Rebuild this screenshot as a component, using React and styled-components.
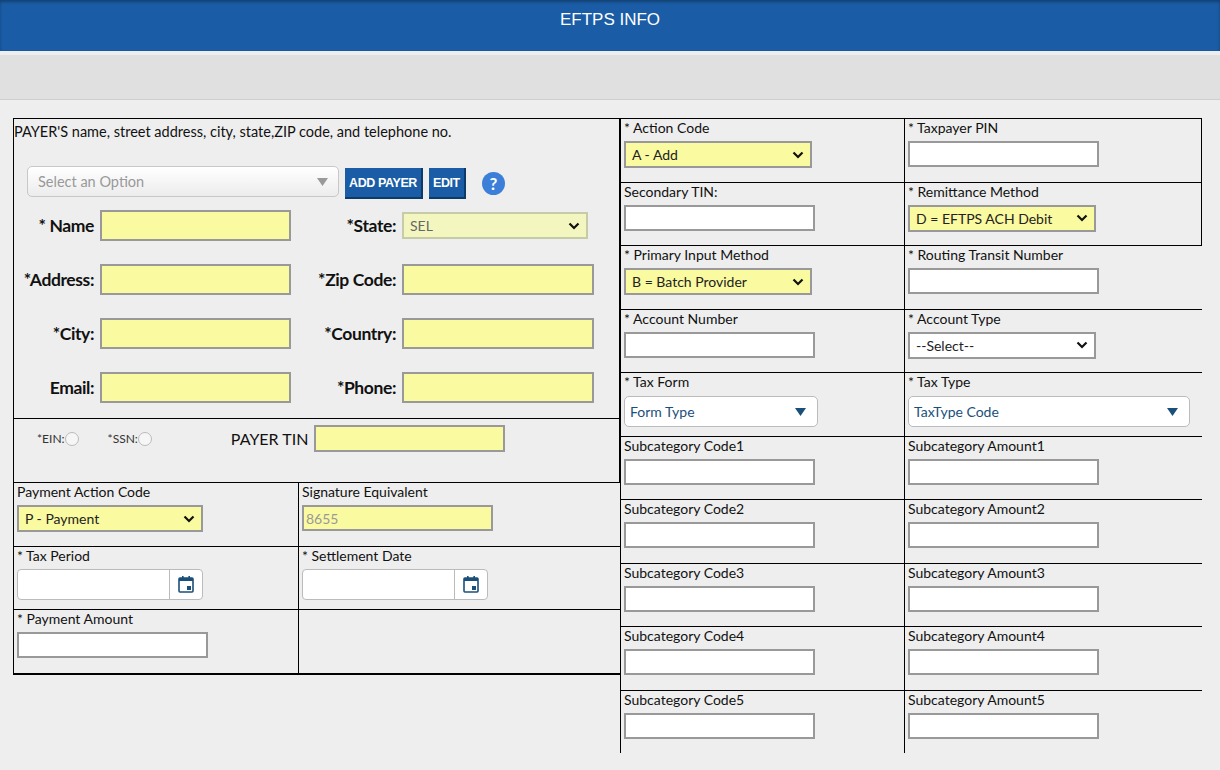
import React from 'react';
import styled, { createGlobalStyle } from 'styled-components';

const Global = createGlobalStyle`
  body { margin: 0; background: #eeeeee; font-family: Lato, "Noto Sans", sans-serif; color: #111; }
  * { box-sizing: border-box; }
`;

const Header = styled.div`
  height: 51px;
  background: #1a5ca5;
  box-shadow: inset 0 2px 3px rgba(0,0,0,0.3);
  color: #fff;
  font-family: "Liberation Sans", Arial, sans-serif;
  font-size: 17px;
  text-align: center;
  padding-top: 10px;
`;

const SubBar = styled.div`
  height: 45px;
  margin-top: 4px;
  background: #e0e0e0;
  border-bottom: 1px solid #cfcfcf;
`;

const Body = styled.div`
  margin-top: 5px;
  background: #eeeeee;
  display: flex;
  align-items: flex-start;
  padding: 13px 0 0 13px;
  height: 665px;
`;

const LeftPanel = styled.div`
  width: 607px;
  border: 1px solid #000;
  border-right: none;
`;

const PayerBox = styled.div`
  height: 299px;
  padding: 4px 0 0 0;
  border-right: 1px solid #000;
`;

const Caption = styled.div`
  font-size: 14.5px;
  margin-bottom: 28px;
`;

const SearchRow = styled.div`
  display: flex;
  align-items: center;
  gap: 6px;
  padding-left: 13px;
  margin-bottom: 11px;
`;

const Combo = styled.div`
  width: 312px;
  height: 31px;
  border: 1px solid #c8c8c8;
  border-radius: 5px;
  background: linear-gradient(#ffffff, #ececec);
  color: #999;
  font-size: 14.5px;
  display: flex;
  align-items: center;
  justify-content: space-between;
  padding: 0 10px;
  margin-top: -4px;
`;

const BlueBtn = styled.button`
  height: 31px;
  background: #1a5ca5;
  color: #fff;
  border: none;
  border-right: 2px solid #0e3a6a;
  border-bottom: 2px solid #0e3a6a;
  font-family: "Liberation Sans", Arial, sans-serif;
  font-weight: 700;
  font-size: 12.5px;
  letter-spacing: -0.4px;
  padding: 0 4px;
`;

const Help = styled.span`
  width: 23px;
  height: 23px;
  border-radius: 50%;
  background: #3b7fd8;
  color: #fff;
  font-weight: 700;
  font-size: 17px;
  display: inline-flex;
  align-items: center;
  justify-content: center;
  margin-left: 10px;
`;

const PayerGrid = styled.div`
  display: grid;
  grid-template-columns: 78px 191px 99px 192px;
  column-gap: 6px;
  row-gap: 23px;
  align-items: center;
  padding-left: 2px;
`;

const BigLabel = styled.label`
  font-size: 17.5px;
  font-weight: 700;
  text-align: right;
  white-space: nowrap;
  letter-spacing: -0.4px;
`;

const YellowInput = styled.input`
  width: ${p => p.$w || 191}px;
  height: ${p => p.$h || 31}px;
  background: #fafaa0;
  border: 2px solid #999;
  font-family: inherit;
  font-size: 14px;
  color: #999;
  padding: 0 2px;
`;

const WhiteInput = styled.input`
  width: ${p => p.$w || 191}px;
  height: 26px;
  background: #fff;
  border: 2px solid #999;
  font-family: inherit;
`;

const Select = styled.div`
  width: ${p => p.$w || 186}px;
  height: 27px;
  background: ${p => p.$white ? '#fff' : p.$pale ? '#f4f6c0' : '#fafaa0'};
  border: 2px solid ${p => p.$pale ? '#c8cba8' : '#999'};
  font-size: 14px;
  color: ${p => p.$pale ? '#666' : '#222'};
  display: flex;
  align-items: center;
  justify-content: space-between;
  padding: 0 6px;
`;

const Chev = () => (
  <svg width="12" height="8" viewBox="0 0 12 8"><path d="M1.5 1.5 6 6l4.5-4.5" fill="none" stroke="#111" strokeWidth="2.2" /></svg>
);

const TinRow = styled.div`
  height: 64px;
  border-top: 1px solid #000;
  border-right: 1px solid #000;
  display: flex;
  align-items: flex-start;
  padding: 6px 0 0 23px;
`;

const Radio = styled.span`
  font-size: 12px;
  color: #333;
  display: inline-flex;
  align-items: center;
  margin: 6px ${p => p.$mr || 0}px 0 0;
  &::after {
    content: '';
    width: 12px;
    height: 12px;
    border: 1px solid #bbb;
    border-radius: 50%;
    background: #f6f6f6;
  }
`;

const TinLabel = styled.span`
  font-size: 16px;
  margin: 4px 6px 0 13px;
`;

const Cells = styled.div`
  display: grid;
  grid-template-columns: ${p => p.$cols};
  grid-auto-rows: 63.5px;
`;

const Cell = styled.div`
  border-top: 1px solid #000;
  border-right: ${p => p.$noRight ? 'none' : '1px solid #000'};
  padding: 0 3px;
  display: flex;
  flex-direction: column;
  align-items: flex-start;
  gap: 5px;
`;

const LeftCells = styled(Cells)`
  border-bottom: 1px solid #000;
`;

const Small = styled.span`
  font-size: 14px;
  line-height: 17px;
`;

const DateBox = styled.div`
  display: flex;
  width: 186px;
  height: 31px;
  background: #fff;
  border: 1px solid #bbb;
  border-radius: 4px;
  overflow: hidden;
`;

const CalBtn = styled.span`
  margin-left: auto;
  width: 33px;
  border-left: 1px solid #bbb;
  display: flex;
  align-items: center;
  justify-content: center;
`;

const Cal = () => (
  <svg width="16" height="18" viewBox="0 0 16 18">
    <rect x="1" y="3" width="14" height="14" rx="1" fill="none" stroke="#1a4f7a" strokeWidth="1.6" />
    <rect x="1" y="3" width="14" height="3" fill="#1a4f7a" />
    <rect x="4" y="1" width="1.6" height="4" fill="#1a4f7a" />
    <rect x="10.4" y="1" width="1.6" height="4" fill="#1a4f7a" />
    <rect x="9" y="11" width="4" height="4" fill="#1a4f7a" />
  </svg>
);

const RightPanel = styled.div`
  width: 588px;
  border-left: 1px solid #000;
`;

const DropSelect = styled.div`
  width: ${p => p.$w}px;
  height: 31px;
  background: #fff;
  border: 1px solid #bbb;
  border-radius: 5px;
  color: #1a4f7a;
  font-size: 14px;
  display: flex;
  align-items: center;
  justify-content: space-between;
  padding: 0 11px 0 5px;
  margin-top: 1px;
`;

const Tri = ({ c = '#1a4f7a' }) => (
  <svg width="11" height="8" viewBox="0 0 11 8"><path d="M0 0h11L5.5 8z" fill={c} /></svg>
);

const RCell = ({ label, children, noRight }) => (
  <Cell $noRight={noRight}>
    <Small>{label}</Small>
    {children}
  </Cell>
);

const payerFields = [
  ['* Name', '*State:'],
  ['*Address:', '*Zip Code:'],
  ['*City:', '*Country:'],
  ['Email:', '*Phone:'],
];

export default function App() {
  const subs = [1, 2, 3, 4, 5];
  return (
    <>
      <Global />
      <Header>EFTPS INFO</Header>
      <SubBar />
      <Body>
        <LeftPanel>
          <PayerBox>
            <Caption>PAYER'S name, street address, city, state,ZIP code, and telephone no.</Caption>
            <SearchRow>
              <Combo>Select an Option <Tri c="#999" /></Combo>
              <BlueBtn>ADD PAYER</BlueBtn>
              <BlueBtn>EDIT</BlueBtn>
              <Help>?</Help>
            </SearchRow>
            <PayerGrid>
              {payerFields.map(([a, b]) => (
                <React.Fragment key={a}>
                  <BigLabel>{a}</BigLabel>
                  <YellowInput />
                  <BigLabel>{b}</BigLabel>
                  {b === '*State:' ? (
                    <Select $pale>SEL <Chev /></Select>
                  ) : (
                    <YellowInput $w={192} />
                  )}
                </React.Fragment>
              ))}
            </PayerGrid>
          </PayerBox>
          <TinRow>
            <Radio $mr={29}>*EIN:</Radio>
            <Radio $mr={66}>*SSN:</Radio>
            <TinLabel>PAYER TIN</TinLabel>
            <YellowInput $w={191} $h={27} />
          </TinRow>
          <LeftCells $cols="285px 322px">
            <Cell>
              <Small>Payment Action Code</Small>
              <Select>P - Payment <Chev /></Select>
            </Cell>
            <Cell>
              <Small>Signature Equivalent</Small>
              <YellowInput $h={26} defaultValue="8655" />
            </Cell>
            <Cell>
              <Small>* Tax Period</Small>
              <DateBox><CalBtn><Cal /></CalBtn></DateBox>
            </Cell>
            <Cell>
              <Small>* Settlement Date</Small>
              <DateBox><CalBtn><Cal /></CalBtn></DateBox>
            </Cell>
            <Cell>
              <Small>* Payment Amount</Small>
              <WhiteInput />
            </Cell>
            <Cell />
          </LeftCells>
        </LeftPanel>
        <RightPanel>
          <Cells $cols="284px 297px">
            <RCell label="* Action Code"><Select $w={188}>A - Add <Chev /></Select></RCell>
            <RCell label="* Taxpayer PIN"><WhiteInput /></RCell>
            <RCell label="Secondary TIN:"><WhiteInput /></RCell>
            <RCell label="* Remittance Method"><Select $w={188}>D = EFTPS ACH Debit <Chev /></Select></RCell>
            <RCell label="* Primary Input Method"><Select $w={188}>B = Batch Provider <Chev /></Select></RCell>
            <RCell label="* Routing Transit Number" noRight><WhiteInput /></RCell>
            <RCell label="* Account Number"><WhiteInput /></RCell>
            <RCell label="* Account Type" noRight><Select $white $w={188}>--Select-- <Chev /></Select></RCell>
            <RCell label="* Tax Form"><DropSelect $w={194}>Form Type <Tri /></DropSelect></RCell>
            <RCell label="* Tax Type" noRight><DropSelect $w={282}>TaxType Code <Tri /></DropSelect></RCell>
            {subs.map(n => (
              <React.Fragment key={n}>
                <RCell label={`Subcategory Code${n}`}><WhiteInput /></RCell>
                <RCell label={`Subcategory Amount${n}`} noRight><WhiteInput /></RCell>
              </React.Fragment>
            ))}
          </Cells>
        </RightPanel>
      </Body>
    </>
  );
}
